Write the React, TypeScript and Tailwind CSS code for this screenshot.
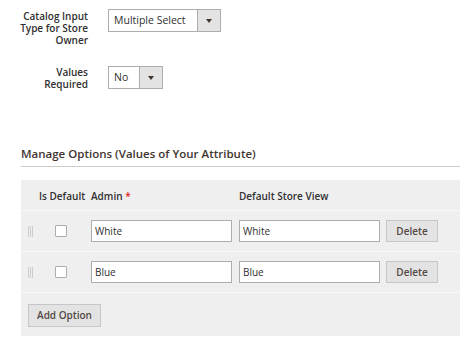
import React from 'react';

const font = { fontFamily: '"Open Sans", "Liberation Sans", sans-serif' };

function Select({ value, width, arrowWidth }: { value: string; width: string; arrowWidth: string }) {
  return (
    <div className={`flex h-[23px] border border-[#adadad] bg-white ${width}`}>
      <div className="flex-1 flex items-center pl-[5px] text-[10.5px] text-[#303030]">{value}</div>
      <div className={`flex items-center justify-center bg-[#e3e3e3] border-l border-[#adadad] ${arrowWidth}`}>
        <svg width="6" height="4" viewBox="0 0 6 4">
          <path d="M0 0h6L3 4z" fill="#41362f" />
        </svg>
      </div>
    </div>
  );
}

function OptionRow({ value }: { value: string }) {
  return (
    <div className="flex items-center h-[41px] border-t border-[#f8f8f8] pl-[7px]">
      <div className="w-[5px] h-[11px] flex gap-[1px]">
        <div className="w-[1px] h-full bg-[#cccccc]" />
        <div className="w-[1px] h-full bg-[#cccccc]" />
        <div className="w-[1px] h-full bg-[#cccccc]" />
      </div>
      <div className="ml-[22px] w-[12px] h-[12px] border border-[#adadad] bg-white rounded-[1px]" />
      <div className="ml-[24px] w-[141px] h-[22px] border border-[#adadad] bg-white flex items-center pl-[3px] text-[10px] text-[#303030]">
        {value}
      </div>
      <div className="ml-[7px] w-[141px] h-[22px] border border-[#adadad] bg-white flex items-center pl-[3px] text-[10px] text-[#303030]">
        {value}
      </div>
      <button className="ml-[6px] w-[52px] h-[22px] border border-[#c6c6c6] bg-[#e3e3e3] text-[10px] font-semibold text-[#514943]">
        Delete
      </button>
    </div>
  );
}

export default function App() {
  return (
    <div className="w-[474px] h-[338px] bg-white overflow-hidden" style={font}>
      {/* attribute properties */}
      <div className="pt-[9px]">
        <div className="flex items-start">
          <div className="w-[88px] pl-[16px] pt-[1px] text-right text-[10px] leading-[12px] font-semibold text-[#303030]">
            Catalog Input Type for Store Owner
          </div>
          <div className="ml-[20px]">
            <Select value="Multiple Select" width="w-[113px]" arrowWidth="w-[23px]" />
          </div>
        </div>
        <div className="flex items-start mt-[20px]">
          <div className="w-[88px] pl-[16px] pt-[0px] text-right text-[10px] leading-[12px] font-semibold text-[#303030]">
            Values Required
          </div>
          <div className="ml-[20px]">
            <Select value="No" width="w-[55px]" arrowWidth="w-[23px]" />
          </div>
        </div>
      </div>

      {/* manage options */}
      <div className="mx-[21px] w-[439px] mt-[54px]">
        <div className="pb-[2px] border-b border-[#cccccc] text-[11.5px] leading-[20px] font-semibold text-[#41362f]">
          Manage Options (Values of Your Attribute)
        </div>
        <div className="mt-[13px] bg-[#efefef] pb-[9px]">
          <div className="flex items-center h-[30px] pt-[2px] text-[10px] font-semibold text-[#303030]">
            <div className="w-[70px] pl-[18px]">Is Default</div>
            <div className="w-[148px]">
              Admin <span className="text-[#e22626]">*</span>
            </div>
            <div>Default Store View</div>
          </div>
          <OptionRow value="White" />
          <OptionRow value="Blue" />
          <div className="border-t border-[#f8f8f8] pt-[8px] pl-[7px]">
            <button className="w-[73px] h-[23px] border border-[#c6c6c6] bg-[#e3e3e3] text-[10px] font-semibold text-[#514943]">
              Add Option
            </button>
          </div>
        </div>
      </div>
    </div>
  );
}
